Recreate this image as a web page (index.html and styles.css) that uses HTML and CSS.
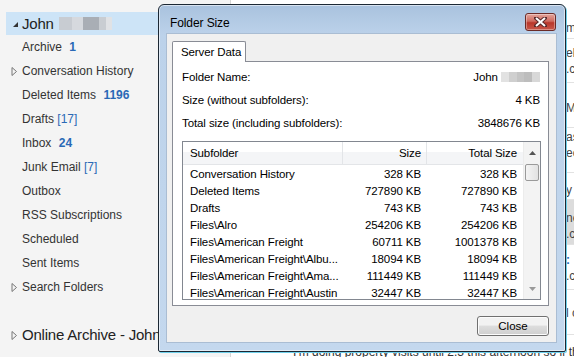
FILE: index.html
```html
<!DOCTYPE html>
<html>
<head>
    <meta charset="utf-8">
    <title>Folder Size</title>
    <link rel="stylesheet" href="styles.css">
</head>
<body>
    <div class="app">
        <nav class="folders">
            <div class="folder account open">
                <svg class="tri" width="7" height="7" viewBox="0 0 7 7"><path d="M6 1 L6 6 L1 6 Z" fill="#333"/></svg>
                <span>John</span><i class="blur wide"></i>
            </div>
            <div class="folder">Archive <b class="count">1</b></div>
            <div class="folder">
                <svg class="tri" width="7" height="9" viewBox="0 0 7 9"><path d="M1 0.5 L5.5 4.5 L1 8.5 Z" fill="none" stroke="#777"/></svg>
                Conversation History
            </div>
            <div class="folder">Deleted Items <b class="count">1196</b></div>
            <div class="folder">Drafts <span class="unread">[17]</span></div>
            <div class="folder">Inbox <b class="count">24</b></div>
            <div class="folder">Junk Email <span class="unread">[7]</span></div>
            <div class="folder">Outbox</div>
            <div class="folder">RSS Subscriptions</div>
            <div class="folder">Scheduled</div>
            <div class="folder">Sent Items</div>
            <div class="folder">
                <svg class="tri" width="7" height="9" viewBox="0 0 7 9"><path d="M1 0.5 L5.5 4.5 L1 8.5 Z" fill="none" stroke="#777"/></svg>
                Search Folders
            </div>
            <div class="folder account archive">
                <svg class="tri" width="7" height="9" viewBox="0 0 7 9"><path d="M1 0.5 L5.5 4.5 L1 8.5 Z" fill="none" stroke="#777"/></svg>
                Online Archive - John
            </div>
        </nav>

        <!-- only the right edge of the message list shows past the dialog -->
        <main class="messages">
            <div class="msg" style="height: 39px; padding-top: 20px"><p>meeting</p></div>
            <div class="msg" style="height: 44px; padding-top: 6px"><p>ebsite</p><p>.com</p></div>
            <div class="msg" style="height: 45px; padding-top: 17px"><p>Monday</p></div>
            <div class="msg" style="height: 45px; padding-top: 1px"><p>ase</p><p>ecord</p></div>
            <div class="msg" style="height: 27px; padding-top: 9px"><p>y 2013</p></div>
            <div class="msg sel" style="height: 45px; padding-top: 10px"><p>new</p><p>.com</p></div>
            <div class="msg" style="height: 45px; padding-top: 7px"><p class="blue">:</p><p>.com</p></div>
            <div class="msg" style="height: 45px; padding-top: 15px"><p>l call</p></div>
            <p class="preview">I'm doing property visits until 2.3 this afternoon so if that works</p>
        </main>
    </div>

    <div class="dialog">
        <div class="titlebar">
            <span class="title">Folder Size</span>
            <button class="x-btn">
                <svg width="13" height="10" viewBox="0 0 13 10"><path d="M2 1 L11 9 M11 1 L2 9" stroke="#5a2a2a" stroke-width="4" stroke-linecap="square"/><path d="M2 1 L11 9 M11 1 L2 9" stroke="#fff" stroke-width="2"/></svg>
            </button>
        </div>
        <div class="client">
            <div class="tabs"><div class="tab">Server Data</div></div>
            <div class="panel">
                <div class="info"><span>Folder Name:</span><span class="val">John <i class="blur"></i></span></div>
                <div class="info"><span>Size (without subfolders):</span><span class="val">4 KB</span></div>
                <div class="info"><span>Total size (including subfolders):</span><span class="val">3848676 KB</span></div>

                <div class="listbox">
                    <div class="list-main">
                        <div class="list-head">
                            <span class="c1">Subfolder</span><span class="c2">Size</span><span class="c3">Total Size</span>
                        </div>
                        <div class="list-body">
                            <div class="item"><span class="c1">Conversation History</span><span class="c2">328 KB</span><span class="c3">328 KB</span></div>
                            <div class="item"><span class="c1">Deleted Items</span><span class="c2">727890 KB</span><span class="c3">727890 KB</span></div>
                            <div class="item"><span class="c1">Drafts</span><span class="c2">743 KB</span><span class="c3">743 KB</span></div>
                            <div class="item"><span class="c1">Files\Alro</span><span class="c2">254206 KB</span><span class="c3">254206 KB</span></div>
                            <div class="item"><span class="c1">Files\American Freight</span><span class="c2">60711 KB</span><span class="c3">1001378 KB</span></div>
                            <div class="item"><span class="c1">Files\American Freight\Albu...</span><span class="c2">18094 KB</span><span class="c3">18094 KB</span></div>
                            <div class="item"><span class="c1">Files\American Freight\Ama...</span><span class="c2">111449 KB</span><span class="c3">111449 KB</span></div>
                            <div class="item"><span class="c1">Files\American Freight\Austin</span><span class="c2">32447 KB</span><span class="c3">32447 KB</span></div>
                        </div>
                    </div>
                    <div class="scrollbar">
                        <div class="sb-up"><svg width="7" height="4" viewBox="0 0 7 4"><path d="M0 4 L3.5 0 L7 4 Z" fill="#555"/></svg></div>
                        <div class="sb-thumb"></div>
                        <div class="sb-track"></div>
                        <div class="sb-down"><svg width="7" height="4" viewBox="0 0 7 4"><path d="M0 0 L7 0 L3.5 4 Z" fill="#999"/></svg></div>
                    </div>
                </div>
            </div>
            <div class="buttons"><button class="close">Close</button></div>
        </div>
    </div>
</body>
</html>
```

FILE: styles.css
```css
body {
    margin: 0;
    width: 574px;
    height: 357px;
    overflow: hidden;
    font-family: "Liberation Sans", Arial, sans-serif;
    background: #fff;
}

.app {
    display: flex;
    height: 357px;
}

/* folder pane */
.folders {
    width: 230px;
    flex: none;
    background: #f4f4f4;
    border-right: 1px solid #d6d6d6;
    padding-top: 12px;
    font-size: 12px;
    color: #333;
}

.folder {
    position: relative;
    height: 24px;
    line-height: 24px;
    padding-left: 16px;
    margin-left: 6px;
    white-space: nowrap;
}

.folder .tri {
    position: absolute;
    left: 5px;
    top: 8px;
}

.account {
    font-size: 15px;
    letter-spacing: -0.2px;
    color: #222;
}

.account.open {
    height: 23px;
    line-height: 23px;
    background: #cde4f7;
}

.account.open .tri {
    left: 6px;
    top: 9px;
}

.archive {
    margin-top: 24px;
}

.count {
    color: #2a69b6;
    margin-left: 4px;
}

.unread {
    color: #2a69b6;
}

.blur {
    display: inline-block;
    vertical-align: -2px;
    width: 39px;
    height: 10px;
    background: linear-gradient(90deg, #e2e2e2 0 20%, #cfcfcf 20% 40%, #c4c4c4 40% 60%, #bdbdbd 60% 80%, #d8d8d8 80%);
}

.blur.wide {
    width: 53px;
    height: 13px;
    margin-left: 5px;
    vertical-align: -1px;
    background: linear-gradient(90deg, #c8ccd2 0 25%, #d6d9de 25% 45%, #a9aeb5 45% 75%, #c9cdd2 75% 88%, #e0e2e5 88%);
}

/* message list behind the dialog */
.messages {
    flex: 1;
    overflow: hidden;
    font-size: 12px;
    color: #444;
}

.msg {
    border-bottom: 1px solid #e2e2e2;
    padding-left: 335px;
    box-sizing: border-box;
    white-space: nowrap;
    overflow: hidden;
}

.msg p {
    margin: 0;
    line-height: 16px;
}

.msg .blue {
    color: #2a69b6;
    font-weight: bold;
}

.msg.sel {
    background: #dcdcdc;
}

.preview {
    margin: 10px 0 0 62px;
    white-space: nowrap;
    font-size: 12px;
    color: #333;
}

/* dialog window */
.dialog {
    position: absolute;
    left: 158px;
    top: 4px;
    width: 408px;
    height: 348px;
    box-sizing: border-box;
    border: 1px solid #1c2834;
    border-radius: 6px 6px 2px 2px;
    background: linear-gradient(180deg, #a9c2de 0, #bcd2ea 30px, #c4d8ee 100%);
    box-shadow: inset 0 0 0 1px rgba(255, 255, 255, 0.55), 1px 1px 0 #6fd0ea;
    padding: 0 8px 8px 7px;
    font-size: 11.5px;
    letter-spacing: -0.1px;
    color: #000;
}

.titlebar {
    position: relative;
    height: 28px;
}

.title {
    position: absolute;
    left: 4px;
    top: 11px;
    font-size: 12px;
}

.x-btn {
    position: absolute;
    right: 1px;
    top: 8px;
    width: 31px;
    height: 18px;
    padding: 0;
    border: 1px solid #6b2b27;
    border-radius: 3px;
    background: linear-gradient(180deg, #e3a59c 0, #cf6a5e 45%, #b8362a 55%, #c9584a 100%);
    box-shadow: inset 0 0 0 1px rgba(255, 255, 255, 0.35);
    display: flex;
    align-items: center;
    justify-content: center;
}

.client {
    height: 310px;
    background: #f0f0f0;
    border: 1px solid #aabdd3;
    box-sizing: border-box;
    padding: 7px 7px 0 5px;
}

.tabs {
    display: flex;
    height: 20px;
    position: relative;
    z-index: 1;
}

.tab {
    width: 74px;
    height: 21px;
    box-sizing: border-box;
    border: 1px solid #898c95;
    border-bottom: none;
    border-radius: 2px 2px 0 0;
    background: #fff;
    padding: 4px 0 0 8px;
}

.panel {
    height: 245px;
    box-sizing: border-box;
    border: 1px solid #898c95;
    background: #fff;
    padding: 4px 7px 0 9px;
}

.info {
    display: flex;
    justify-content: space-between;
    height: 23px;
    line-height: 23px;
    padding-right: 1px;
}

.val .blur {
    vertical-align: -1px;
}

/* list view */
.listbox {
    display: flex;
    margin-top: 6px;
    height: 159px;
    box-sizing: border-box;
    border: 1px solid #828790;
    overflow: hidden;
}

.list-main {
    width: 340px;
}

.list-head,
.item {
    display: flex;
    white-space: nowrap;
}

.list-head {
    height: 23px;
    line-height: 22px;
    box-sizing: border-box;
    border-bottom: 1px solid #e3e5e8;
    background: linear-gradient(180deg, #fff 0 45%, #f4f5f7 45% 100%);
}

.list-head span + span {
    border-left: 1px solid #e3e5e8;
}

.list-body {
    padding-top: 1px;
}

.item {
    height: 17px;
    line-height: 17px;
}

.c1 {
    width: 159px;
    padding-left: 7px;
    box-sizing: border-box;
    overflow: hidden;
}

.c2 {
    width: 84px;
    padding-right: 5px;
    box-sizing: border-box;
    text-align: right;
}

.c3 {
    width: 97px;
    padding-right: 6px;
    box-sizing: border-box;
    text-align: right;
}

.scrollbar {
    width: 17px;
    display: flex;
    flex-direction: column;
    background: #f3f3f3;
    border-left: 1px solid #ececec;
}

.sb-up,
.sb-down {
    height: 20px;
    display: flex;
    align-items: center;
    justify-content: center;
}

.sb-up {
    height: 22px;
}

.sb-thumb {
    height: 15px;
    margin: 0 1px;
    border: 1px solid #9a9a9a;
    border-radius: 2px;
    background: linear-gradient(90deg, #f4f4f4, #e2e2e2);
}

.sb-track {
    flex: 1;
}

.buttons {
    display: flex;
    justify-content: flex-end;
    padding: 10px 0 0;
}

.close {
    width: 72px;
    height: 20px;
    font: inherit;
    padding: 0;
    border: 1px solid #707070;
    border-radius: 3px;
    background: linear-gradient(180deg, #f2f2f2 0 45%, #dddddd 50%, #cfcfcf 100%);
    box-shadow: inset 0 0 0 1px #fcfcfc;
    color: #000;
}
```
